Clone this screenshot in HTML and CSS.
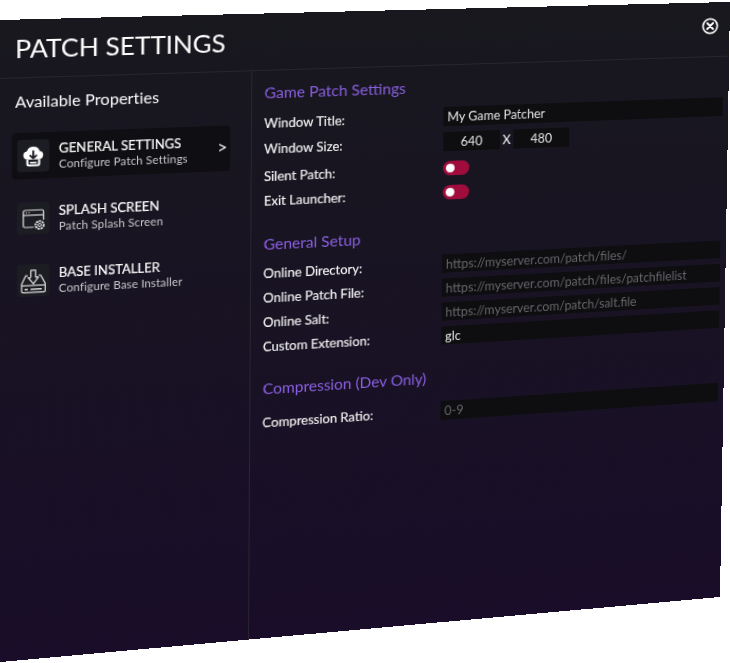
FILE: index.html
```html
<!DOCTYPE html>
<html lang="en">
<head>
<meta charset="utf-8">
<title>Patch Settings</title>
<link rel="stylesheet" href="styles.css">
</head>
<body>
<div class="window">
  <header class="header">
    <h1 class="title">PATCH SETTINGS</h1>
    <svg class="close" viewBox="0 0 18 18" aria-label="Close"><circle cx="9" cy="9" r="7.700" fill="none" stroke="#fff" stroke-width="1.800"/><path d="M6 6l6 6M12 6l-6 6" stroke="#fff" stroke-width="2.200" stroke-linecap="round"/></svg>
  </header>
  <div class="body">
    <aside class="sidebar">
      <h2 class="side-title">Available Properties</h2>
      <nav class="nav">
        <div class="item active">
          <span class="icon"><svg viewBox="0 0 30 30"><path d="M10 18.800a4.200 4.200 0 0 1-1-8.300 6.300 6.300 0 0 1 12 0 4.200 4.200 0 0 1-1 8.300z" fill="#fff"/><path d="M15 10.500v7M12.200 14.800l2.800 2.800 2.800-2.800" fill="none" stroke="#1c1c22" stroke-width="1.800" stroke-linecap="round" stroke-linejoin="round"/><path d="M9.500 19.500v3.500a1.500 1.500 0 0 0 1.500 1.500h8a1.500 1.500 0 0 0 1.500-1.500v-3.500" fill="none" stroke="#fff" stroke-width="2" stroke-linecap="round"/><path d="M12.500 21.800h5" stroke="#fff" stroke-width="1.600" stroke-linecap="round"/></svg></span>
          <div class="item-text"><div class="item-name">GENERAL SETTINGS</div><div class="item-sub">Configure Patch Settings</div></div>
          <span class="chevron">&gt;</span>
        </div>
        <div class="item">
          <span class="icon"><svg viewBox="0 0 30 30"><path d="M15.500 24H7.500a1.800 1.800 0 0 1-1.800-1.800V8.800A1.800 1.800 0 0 1 7.500 7h15.400a1.800 1.800 0 0 1 1.800 1.800V17" fill="none" stroke="#ddd" stroke-width="1.200"/><path d="M5.700 12h19" stroke="#ddd" stroke-width="1.200"/><path d="M8 9.500h1M10.500 9.500h1" stroke="#ddd" stroke-width="1"/><circle cx="21" cy="22" r="3.800" fill="none" stroke="#ddd" stroke-width="2" stroke-dasharray="2 .8"/><circle cx="21" cy="22" r="1.500" fill="none" stroke="#ddd" stroke-width="1"/></svg></span>
          <div class="item-text"><div class="item-name">SPLASH SCREEN</div><div class="item-sub">Patch Splash Screen</div></div>
        </div>
        <div class="item">
          <span class="icon"><svg viewBox="0 0 30 30"><path d="M10 10H8L4.200 18.500v7a1.300 1.300 0 0 0 1.300 1.300h19.500a1.300 1.300 0 0 0 1.300-1.300v-7L22 10h-2" fill="none" stroke="#ddd" stroke-width="1.200"/><path d="M4.200 20h22" stroke="#ddd" stroke-width="1.200"/><path d="M12.800 4.800h4.500v7h2.700l-4.800 6.500-5-6.500h2.600z" fill="none" stroke="#ddd" stroke-width="1.200" stroke-linejoin="round"/><path d="M7 23.700h3M12.500 23.700h10.500" stroke="#ddd" stroke-width="1.400"/></svg></span>
          <div class="item-text"><div class="item-name">BASE INSTALLER</div><div class="item-sub">Configure Base Installer</div></div>
        </div>
      </nav>
    </aside>
    <main class="main">
      <section class="section">
        <h3 class="heading">Game Patch Settings</h3>
        <div class="row"><label class="label">Window Title:</label><input class="input" value="My Game Patcher"></div>
        <div class="row"><label class="label">Window Size:</label><div class="size"><input class="input small" value="640"><span class="times">X</span><input class="input small" value="480"></div></div>
        <div class="row row-toggle first-toggle"><label class="label">Silent Patch:</label><span class="toggle"><span class="knob"></span></span></div>
        <div class="row row-toggle"><label class="label">Exit Launcher:</label><span class="toggle"><span class="knob"></span></span></div>
      </section>
      <section class="section setup">
        <h3 class="heading">General Setup</h3>
        <div class="row row-tight"><label class="label">Online Directory:</label><input class="input" placeholder="https://myserver.com/patch/files/"></div>
        <div class="row row-tight"><label class="label">Online Patch File:</label><input class="input" placeholder="https://myserver.com/patch/files/patchfilelist"></div>
        <div class="row row-tight"><label class="label">Online Salt:</label><input class="input" placeholder="https://myserver.com/patch/salt.file"></div>
        <div class="row row-tight"><label class="label">Custom Extension:</label><input class="input" value="glc"></div>
      </section>
      <section class="section compression">
        <h3 class="heading">Compression (Dev Only)</h3>
        <div class="row"><label class="label">Compression Ratio:</label><input class="input" placeholder="0-9"></div>
      </section>
    </main>
  </div>
</div>
</body>
</html>
```
FILE: styles.css
```css
* { box-sizing: border-box; }
html, body { margin: 0; padding: 0; height: 100%; overflow: hidden; background: #fff; }
body { font-family: "Lato", "Liberation Sans", sans-serif; color: #fff; }
h1, h2, h3 { margin: 0; font-weight: 400; }

.window {
  width: 730px;
  height: 640px;
  display: flex;
  flex-direction: column;
  background: linear-gradient(180deg, #18181e 0%, #190d29 100%);
  transform-origin: 0 0;
  transform: matrix3d(1.08063, -0.024437, 0, 0.00011045, 0, 1.01865, 0, 0.00002345, 0, 0, 1, 0, 0, 20, 0, 1);
}

.header {
  height: 58px;
  flex: none;
  display: flex;
  justify-content: space-between;
  padding: 13px 12px 0 14px;
  border-bottom: 1px solid #26262c;
}
.title { font-size: 25px; line-height: 30px; letter-spacing: -0.05px; }
.close { width: 18px; height: 18px; margin-top: 3px; }

.body { flex: 1; display: flex; min-height: 0; }

.sidebar { width: 240px; flex: none; border-right: 1px solid #27272c; padding: 13px 20px 0 11px; }
.side-title { font-size: 15.500px; line-height: 20px; padding-left: 3px; letter-spacing: 0.05px; }
.nav { margin-top: 21px; display: flex; flex-direction: column; gap: 16px; }

.item { height: 46px; display: flex; align-items: center; padding: 0 3px 0 5px; border-radius: 4px; }
.item.active { background: #0f0f13; }
.icon { width: 30px; height: 32px; flex: none; background: #1c1c23; border-radius: 3px; display: flex; }
.icon svg { width: 100%; height: 100%; }
.item-text { margin-left: 9px; flex: 1; min-width: 0; padding-top: 1px; }
.item-name { font-size: 12.500px; line-height: 15px; -webkit-text-stroke: 0.15px #fff; }
.item-sub { font-size: 11px; line-height: 15px; color: #c9c9cc; letter-spacing: 0.15px; }
.chevron { font-size: 17px; margin-top: -4px; }

.main { flex: 1; padding: 12px 6px 0 12px; }
.heading { font-size: 15.500px; line-height: 20px; color: #8a5fe0; margin-bottom: 8px; }

.row { display: flex; align-items: center; height: 26px; }
.row-toggle { height: 25px; }
.first-toggle { margin-top: 2px; }
.row-tight { height: 25px; }
.setup { margin-top: 22px; }
.setup .heading { margin-bottom: 7px; }
.compression { margin-top: 21px; }
.compression .heading { margin-bottom: 12px; }

.label { width: 179px; flex: none; font-size: 13px; color: #f2f2f2; -webkit-text-stroke: 0.15px #f2f2f2; }
.input {
  flex: 1;
  min-width: 0;
  height: 20px;
  border: 0;
  outline: 0;
  padding: 0 4px;
  background: #0e0e11;
  color: #e6e6e6;
  font-family: inherit;
  font-size: 12.800px;
}
.row-tight .input { height: 19px; }
.input::placeholder { color: #66666a; opacity: 1; }
.size { display: flex; align-items: center; }
.input.small { flex: none; width: 58px; text-align: center; }
.times { width: 14px; text-align: center; font-size: 13px; }

.toggle { width: 27px; height: 15px; border-radius: 8px; background: #a00d3d; display: flex; align-items: center; padding-left: 3px; }
.knob { width: 9px; height: 9px; border-radius: 50%; background: #fff; }
```
